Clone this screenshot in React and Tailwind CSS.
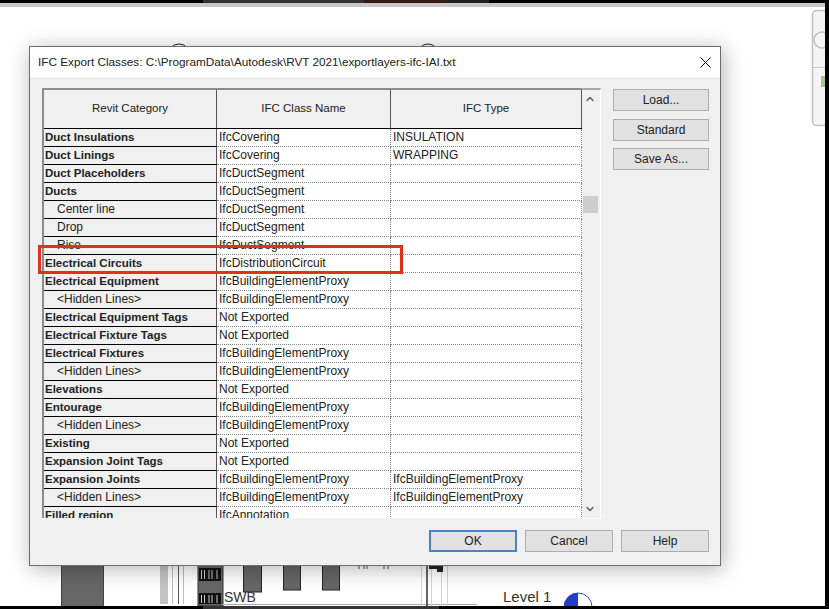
import { ChevronUp, ChevronDown } from 'lucide-react';

const proxy = 'IfcBuildingElementProxy';
const rows = [
    ['Duct Insulations', 1, 'IfcCovering', 'INSULATION'],
    ['Duct Linings', 1, 'IfcCovering', 'WRAPPING'],
    ['Duct Placeholders', 1, 'IfcDuctSegment', ''],
    ['Ducts', 1, 'IfcDuctSegment', ''],
    ['Center line', 0, 'IfcDuctSegment', ''],
    ['Drop', 0, 'IfcDuctSegment', ''],
    ['Rise', 0, 'IfcDuctSegment', ''],
    ['Electrical Circuits', 1, 'IfcDistributionCircuit', ''],
    ['Electrical Equipment', 1, proxy, ''],
    ['<Hidden Lines>', 0, proxy, ''],
    ['Electrical Equipment Tags', 1, 'Not Exported', ''],
    ['Electrical Fixture Tags', 1, 'Not Exported', ''],
    ['Electrical Fixtures', 1, proxy, ''],
    ['<Hidden Lines>', 0, proxy, ''],
    ['Elevations', 1, 'Not Exported', ''],
    ['Entourage', 1, proxy, ''],
    ['<Hidden Lines>', 0, proxy, ''],
    ['Existing', 1, 'Not Exported', ''],
    ['Expansion Joint Tags', 1, 'Not Exported', ''],
    ['Expansion Joints', 1, proxy, proxy],
    ['<Hidden Lines>', 0, proxy, proxy],
    ['Filled region', 1, 'IfcAnnotation', ''],
];

function DialogButton({ children, className = 'border border-[#adadad]' }) {
    return (
        <div className={`flex h-[22px] items-center justify-center bg-[#e1e1e1] text-[12px] text-[#222] ${className}`}>
            {children}
        </div>
    );
}

function Grid() {
    return (
        <div className="h-[430px] w-[540px] shrink-0 overflow-hidden border-t-2 border-l-2 border-[#8c8c8c] bg-white">
            <div className="flex h-[39px] border-b border-black bg-[#f0f0f0] text-[11.5px]">
                <div className="flex w-[173px] items-center justify-center border-r border-[#555]">Revit Category</div>
                <div className="flex w-[174px] items-center justify-center border-r border-[#555]">IFC Class Name</div>
                <div className="flex w-[191px] items-center justify-center border-r border-[#555]">IFC Type</div>
            </div>
            {rows.map((row, i) => (
                <div key={i} className="flex h-[18px] text-[12px] leading-[17px]">
                    <div className={`w-[173px] border-r border-b border-r-[#555] border-b-black bg-[#f0f0f0] ${row[1] ? 'pl-[1px] text-[11.5px] font-bold' : 'pl-[13px]'}`}>
                        {row[0]}
                    </div>
                    <div className="w-[174px] border-r border-b border-dotted border-[#888] pl-[2px]">{row[2]}</div>
                    <div className="w-[191px] border-r border-b border-dotted border-[#888] pl-[2px]">{row[3]}</div>
                </div>
            ))}
        </div>
    );
}

function Dialog() {
    return (
        <div className="absolute top-[46px] left-[29px] flex h-[520px] w-[692px] flex-col border border-[#6d6d6d] bg-[#f0f0f0] shadow-[2px_3px_20px_rgba(0,0,0,0.3)]">
            <div className="flex h-[30px] shrink-0 items-center justify-between bg-white pr-[9px] pl-[8px] text-[11.75px]">
                <span>IFC Export Classes: C:\ProgramData\Autodesk\RVT 2021\exportlayers-ifc-IAI.txt</span>
                <svg width="11" height="11" viewBox="0 0 11 11" className="stroke-[#111]">
                    <path d="M0.5 0.5L10.5 10.5M10.5 0.5L0.5 10.5" fill="none" />
                </svg>
            </div>
            <div className="flex pt-[11px] pl-[12px]">
                <Grid />
                <div className="relative flex h-[431px] w-[19px] flex-col items-center justify-between border-t-2 border-r border-b border-t-[#a8a8a8] border-r-white border-b-white bg-[#f0f0f0] py-[3px] pr-[2px]">
                    <ChevronUp size={12} strokeWidth={3} className="text-[#606060]" />
                    <div className="absolute top-[106px] left-[1px] h-[17px] w-[15px] bg-[#cdcdcd]" />
                    <ChevronDown size={12} strokeWidth={3} className="text-[#606060]" />
                </div>
                <div className="mt-[1px] ml-[12px] flex w-[96px] flex-col">
                    <DialogButton>Load...</DialogButton>
                    <DialogButton className="mt-[8px] border border-[#adadad]">Standard</DialogButton>
                    <DialogButton className="mt-[7px] border border-[#adadad]">Save As...</DialogButton>
                </div>
            </div>
            <div className="mt-[11px] flex justify-end gap-[8px] pr-[11px]">
                <DialogButton className="w-[88px] border-2 border-[#4a80d0]">OK</DialogButton>
                <DialogButton className="w-[88px] border border-[#adadad]">Cancel</DialogButton>
                <DialogButton className="w-[88px] border border-[#adadad]">Help</DialogButton>
            </div>
        </div>
    );
}

// the Revit sheet that shows around the dialog
function Drawing() {
    return (
        <svg width="829" height="609" viewBox="0 0 829 609" className="absolute top-0 left-0">
            <circle cx="179" cy="55" r="11" fill="none" stroke="#222" />
            <circle cx="428" cy="55" r="11" fill="none" stroke="#222" />

            <rect x="61.5" y="560" width="42" height="50" fill="#666" stroke="#444" />
            <rect x="160" y="560" width="8" height="44" fill="#c4c4c4" />
            <path d="M172.5 560V604M183.5 560V604" stroke="#bbb" fill="none" />
            <path d="M178.5 560V604" stroke="#555" fill="none" />

            <rect x="198" y="560" width="25" height="46" fill="#666" stroke="#333" />
            <rect x="199" y="568" width="22" height="13" fill="#111" />
            <rect x="199" y="593" width="22" height="11" fill="#111" />
            <path d="M201.5 570V579M204.5 570V579M209 570V579M212 570V579M217 570V579M201.5 595V603M204.5 595V603M209 595V603M212 595V603M217 595V603" stroke="#ccc" fill="none" />

            <rect x="243.5" y="560" width="18" height="32" fill="#666" stroke="#222" />
            <rect x="283.5" y="560" width="17" height="30" fill="#666" stroke="#222" />
            <rect x="322.5" y="560" width="17" height="30" fill="#666" stroke="#222" />
            <path d="M359 566V569M364 566V569M367 566V569M384 566V569M388 566V569" stroke="#555" fill="none" />

            <path d="M222 604.5H477" stroke="#aaa" fill="none" />
            <path d="M421.5 560V606M431.5 560V606M441.5 560V606M447.5 560V606" stroke="#d4d4d4" fill="none" />
            <path d="M427 560V606" stroke="#333" fill="none" strokeWidth="1.5" />
            <path d="M429 566H443V572H437V569H429Z" fill="#222" />

            <circle cx="578" cy="607" r="14" fill="none" stroke="#3050c8" />
            <path d="M578 607V593A14 14 0 0 0 564 607Z" fill="#2440c0" />

            <rect x="812.5" y="10.5" width="30" height="115" rx="4" fill="#f4f4f4" stroke="#c0c0c0" strokeWidth="1.5" />
            <circle cx="822" cy="40" r="8" fill="none" stroke="#c0c0c0" strokeWidth="1.5" />
            <path d="M812 67.5H829" stroke="#c8c8c8" fill="none" />
            <rect x="821" y="76" width="8" height="11" fill="#a6c48c" />
        </svg>
    );
}

export default function App() {
    return (
        <div className="relative h-[609px] w-[829px] overflow-hidden bg-white font-['Liberation_Sans',sans-serif] text-[#222]">
            <Drawing />
            <span className="absolute top-[589px] left-[224px] text-[14px] leading-[16px] text-[#333]">SWB</span>
            <span className="absolute top-[588px] left-[503px] text-[15px] leading-[17px] text-[#333]">Level 1</span>

            <div className="absolute top-0 left-0 flex h-[3px] w-full bg-black">
                <div className="ml-[203px] w-[161px] bg-[#333]" />
                <div className="w-[79px] bg-[#3a1a14]" />
                <div className="w-[46px] bg-[#222]" />
            </div>
            <div className="absolute top-[3px] left-0 h-[4px] w-full bg-[#c8c8c8]" />
            <div className="absolute top-0 right-0 h-full w-[4px] bg-black" />

            <Dialog />
            <div className="absolute top-[245px] left-[38px] h-[29px] w-[365px] border-[3px] border-[#e0301e]" />

            <div className="absolute bottom-0 left-0 flex h-[3px] w-full bg-black">
                <div className="ml-[203px] w-[236px] bg-[#333]" />
            </div>
        </div>
    );
}
